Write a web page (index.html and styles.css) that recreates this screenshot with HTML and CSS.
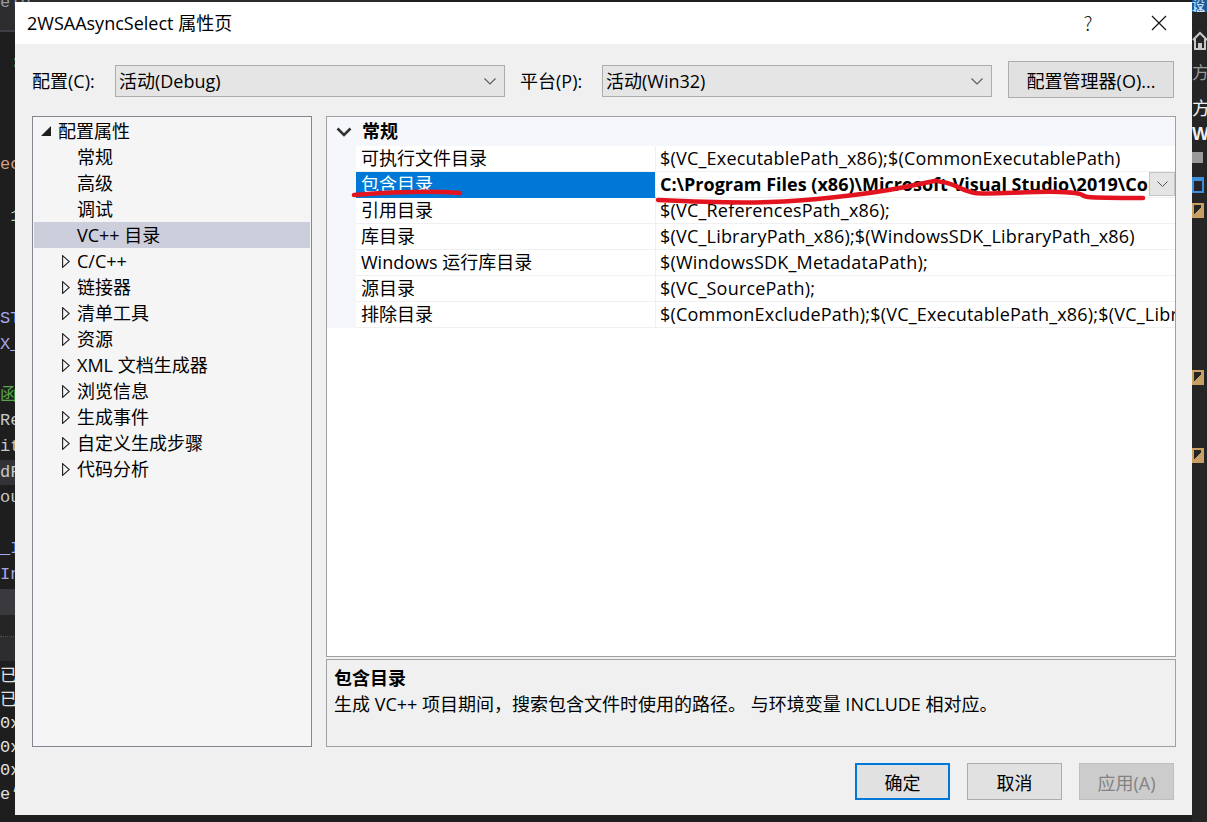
FILE: index.html
```html
<!DOCTYPE html>
<html lang="zh-CN">
<head>
<meta charset="utf-8">
<title>2WSAAsyncSelect 属性页</title>
<link rel="stylesheet" href="styles.css">
</head>
<body>
<div class="desktop">
  <div class="editor">
    <div class="ed-top">ele</div>
    <div class="ed-tabs"></div>
    <div class="code">
      <div class="ln c-green">&nbsp;:</div>
      <div class="ln"></div>
      <div class="ln"></div>
      <div class="ln"></div>
      <div class="ln c-str">ect</div>
      <div class="ln"></div>
      <div class="ln c-num">&nbsp;1</div>
      <div class="ln"></div>
      <div class="ln"></div>
      <div class="ln"></div>
      <div class="ln c-mac">ST</div>
      <div class="ln c-mac">X_</div>
      <div class="ln"></div>
      <div class="ln c-cmt">函数</div>
      <div class="ln c-gray">Re</div>
      <div class="ln c-gray">it</div>
      <div class="ln c-gray hl">dF</div>
      <div class="ln c-gray">ou</div>
      <div class="ln"></div>
      <div class="ln c-mac">_I</div>
      <div class="ln c-mac">In</div>
    </div>
    <div class="ed-scroll"></div>
    <div class="ed-gap"></div>
    <div class="out-head"></div>
    <div class="out">
      <div class="oln">已</div>
      <div class="oln">已</div>
      <div class="oln">0x</div>
      <div class="oln">0x</div>
      <div class="oln">0x</div>
      <div class="oln">e’&nbsp;&nbsp;已退出，返回值为 0 (0x0)。</div>
    </div>
  </div>

  <div class="side">
    <div class="sd-tab">设计</div>
    <svg class="sd-house" width="15" height="20" viewBox="0 0 15 20"><path d="M1 10 L8 3 L15 10 M3 9 V19 H13 V9" fill="none" stroke="#c8c8c8" stroke-width="2"/><rect x="6" y="13" width="4" height="6" fill="#c8c8c8"/></svg>
    <div class="sd-txt">方案</div>
    <div class="sd-txt2">方</div>
    <div class="sd-w">W</div>
    <div class="sd-sq"></div>
    <div class="sd-blue"></div>
    <div class="sd-gold"></div>
    <div class="sd-space"></div>
    <div class="sd-gold"></div>
    <div class="sd-space2"></div>
    <div class="sd-gold"></div>
  </div>

  <div class="dialog">
    <div class="titlebar">
      <span class="title">2WSAAsyncSelect 属性页</span>
      <span class="help">?</span>
      <span class="close">
        <svg width="16" height="16" viewBox="0 0 16 16"><path d="M1 1 L15 15 M15 1 L1 15" stroke="#1a1a1a" stroke-width="1.3"/></svg>
      </span>
    </div>

    <div class="body">
      <div class="config-row">
        <span class="lbl">配置(C):</span>
        <div class="select">
          <span>活动(Debug)</span>
          <svg class="chev" width="12" height="7" viewBox="0 0 12 7"><path d="M0.5 0.5 L6 6 L11.5 0.5" fill="none" stroke="#5a5a5a" stroke-width="1.1"/></svg>
        </div>
        <span class="lbl lbl2">平台(P):</span>
        <div class="select">
          <span>活动(Win32)</span>
          <svg class="chev" width="12" height="7" viewBox="0 0 12 7"><path d="M0.5 0.5 L6 6 L11.5 0.5" fill="none" stroke="#5a5a5a" stroke-width="1.1"/></svg>
        </div>
        <button class="btn btn-mgr">配置管理器(O)...</button>
      </div>

      <div class="main">
        <div class="tree">
          <div class="trow">
            <svg class="t-open" width="10" height="10" viewBox="0 0 10 10"><polygon points="10,0 10,10 0,10" fill="#1e1e1e"/></svg>
            <span>配置属性</span>
          </div>
          <div class="trow leaf"><span>常规</span></div>
          <div class="trow leaf"><span>高级</span></div>
          <div class="trow leaf"><span>调试</span></div>
          <div class="trow leaf sel"><span>VC++ 目录</span></div>
          <div class="trow sub"><svg class="t-closed" width="8" height="13" viewBox="0 0 8 13"><polygon points="0.6,0.6 7.3,6.5 0.6,12.4" fill="none" stroke="#1e1e1e" stroke-width="1.1"/></svg><span>C/C++</span></div>
          <div class="trow sub"><svg class="t-closed" width="8" height="13" viewBox="0 0 8 13"><polygon points="0.6,0.6 7.3,6.5 0.6,12.4" fill="none" stroke="#1e1e1e" stroke-width="1.1"/></svg><span>链接器</span></div>
          <div class="trow sub"><svg class="t-closed" width="8" height="13" viewBox="0 0 8 13"><polygon points="0.6,0.6 7.3,6.5 0.6,12.4" fill="none" stroke="#1e1e1e" stroke-width="1.1"/></svg><span>清单工具</span></div>
          <div class="trow sub"><svg class="t-closed" width="8" height="13" viewBox="0 0 8 13"><polygon points="0.6,0.6 7.3,6.5 0.6,12.4" fill="none" stroke="#1e1e1e" stroke-width="1.1"/></svg><span>资源</span></div>
          <div class="trow sub"><svg class="t-closed" width="8" height="13" viewBox="0 0 8 13"><polygon points="0.6,0.6 7.3,6.5 0.6,12.4" fill="none" stroke="#1e1e1e" stroke-width="1.1"/></svg><span>XML 文档生成器</span></div>
          <div class="trow sub"><svg class="t-closed" width="8" height="13" viewBox="0 0 8 13"><polygon points="0.6,0.6 7.3,6.5 0.6,12.4" fill="none" stroke="#1e1e1e" stroke-width="1.1"/></svg><span>浏览信息</span></div>
          <div class="trow sub"><svg class="t-closed" width="8" height="13" viewBox="0 0 8 13"><polygon points="0.6,0.6 7.3,6.5 0.6,12.4" fill="none" stroke="#1e1e1e" stroke-width="1.1"/></svg><span>生成事件</span></div>
          <div class="trow sub"><svg class="t-closed" width="8" height="13" viewBox="0 0 8 13"><polygon points="0.6,0.6 7.3,6.5 0.6,12.4" fill="none" stroke="#1e1e1e" stroke-width="1.1"/></svg><span>自定义生成步骤</span></div>
          <div class="trow sub"><svg class="t-closed" width="8" height="13" viewBox="0 0 8 13"><polygon points="0.6,0.6 7.3,6.5 0.6,12.4" fill="none" stroke="#1e1e1e" stroke-width="1.1"/></svg><span>代码分析</span></div>
        </div>

        <div class="right">
          <div class="grid">
            <div class="cat">
              <svg class="cat-chev" width="16" height="10" viewBox="0 0 16 10"><path d="M1.5 1.5 L8 8 L14.5 1.5" fill="none" stroke="#333" stroke-width="2.6"/></svg>
              <span class="cat-name">常规</span>
            </div>
            <div class="prow">
              <div class="pm"></div>
              <div class="pn">可执行文件目录</div>
              <div class="pv">$(VC_ExecutablePath_x86);$(CommonExecutablePath)</div>
            </div>
            <div class="prow psel">
              <div class="pm"></div>
              <div class="pn">包含目录</div>
              <div class="pv">
                <span class="pv-text">C:\Program Files (x86)\Microsoft Visual Studio\2019\Community\VC\Tools\MSVC\include</span>
                <span class="pv-drop"><svg width="11" height="6" viewBox="0 0 11 6"><path d="M0.5 0.5 L5.5 5.5 L10.5 0.5" fill="none" stroke="#555" stroke-width="1"/></svg></span>
              </div>
            </div>
            <div class="prow">
              <div class="pm"></div>
              <div class="pn">引用目录</div>
              <div class="pv">$(VC_ReferencesPath_x86);</div>
            </div>
            <div class="prow">
              <div class="pm"></div>
              <div class="pn">库目录</div>
              <div class="pv">$(VC_LibraryPath_x86);$(WindowsSDK_LibraryPath_x86)</div>
            </div>
            <div class="prow">
              <div class="pm"></div>
              <div class="pn">Windows 运行库目录</div>
              <div class="pv">$(WindowsSDK_MetadataPath);</div>
            </div>
            <div class="prow">
              <div class="pm"></div>
              <div class="pn">源目录</div>
              <div class="pv">$(VC_SourcePath);</div>
            </div>
            <div class="prow">
              <div class="pm"></div>
              <div class="pn">排除目录</div>
              <div class="pv">$(CommonExcludePath);$(VC_ExecutablePath_x86);$(VC_LibraryPath_x86)</div>
            </div>
          </div>
          <div class="desc">
            <div class="desc-title">包含目录</div>
            <div class="desc-text">生成 VC++ 项目期间，搜索包含文件时使用的路径。 与环境变量 INCLUDE 相对应。</div>
          </div>
        </div>
      </div>

      <div class="buttons">
        <button class="btn btn-ok">确定</button>
        <button class="btn">取消</button>
        <button class="btn btn-dis">应用(A)</button>
      </div>
    </div>
  </div>

  <svg class="marks" width="1207" height="822" viewBox="0 0 1207 822">
    <path d="M354 195 C 380 193, 420 190, 460 193" fill="none" stroke="#e3141f" stroke-width="4.5" stroke-linecap="round"/>
    <path d="M658 200 C 700 202, 740 203, 770 202 S 860 196, 905 187 S 930 181, 942 182 S 962 191, 975 193 S 1030 191, 1060 192 S 1078 196, 1088 197 S 1130 198, 1143 198" fill="none" stroke="#e3141f" stroke-width="4.5" stroke-linecap="round"/>
  </svg>
</div>
</body>
</html>
```
FILE: styles.css
```css
* { box-sizing: border-box; }

html, body {
  margin: 0;
  padding: 0;
}

body {
  width: 1207px;
  height: 822px;
  overflow: hidden;
  background: #1e1e1e;
}

.desktop {
  position: relative;
  width: 1207px;
  height: 822px;
  overflow: hidden;
  background: #1e1e1e;
}

/* ---------- background editor (left) ---------- */
.editor {
  position: absolute;
  left: 0;
  top: 0;
  width: 400px;
  height: 822px;
  background: #1e1e1e;
  font-family: "Liberation Mono", "Noto Sans CJK SC", monospace;
  font-size: 17px;
  color: #dcdcdc;
}
.ed-top {
  height: 10px;
  line-height: 6px;
  color: #9a9a9a;
  overflow: hidden;
  background: #2d2d30;
}
.ed-tabs {
  height: 22px;
  background: #2d2d30;
  border-bottom: 2px solid #3f3f46;
}
.code {
  padding-top: 18px;
}
.ln {
  height: 25.6px;
  line-height: 25.6px;
  white-space: pre;
}
.c-green { color: #57a64a; }
.c-str { color: #d69d85; }
.c-num { color: #b5cea8; }
.c-mac { color: #a6a6e8; }
.c-cmt { color: #57a64a; }
.c-gray { color: #c8c8c8; }
.hl { background: #333337; }
.ed-scroll {
  height: 26px;
  margin-top: 2px;
  background: #3a3a3e;
}
.ed-gap {
  height: 22px;
  background: #252526;
  border-bottom: 1px dotted #555;
}
.out-head {
  height: 24px;
  background: #2d2d30;
}
.out {
  padding-top: 4px;
}
.oln {
  height: 23.5px;
  line-height: 23.5px;
  white-space: pre;
  color: #e0e0e0;
}

/* ---------- right side strip ---------- */
.side {
  position: absolute;
  left: 1192px;
  top: 0;
  width: 15px;
  height: 822px;
  background: #252526;
  display: flex;
  flex-direction: column;
  align-items: flex-start;
  overflow: hidden;
  font-family: "Noto Sans CJK SC", sans-serif;
}
.sd-tab {
  width: 15px;
  height: 12px;
  background: #1c5a99;
  color: #d0e4ff;
  font-size: 13px;
  line-height: 8px;
  overflow: hidden;
}
.sd-house {
  margin-top: 18px;
  margin-left: 0;
}
.sd-txt {
  margin-top: 10px;
  height: 24px;
  font-size: 17px;
  line-height: 24px;
  color: #9a9a9a;
  white-space: nowrap;
}
.sd-txt2 {
  margin-top: 12px;
  height: 22px;
  font-size: 18px;
  line-height: 22px;
  color: #f0f0f0;
  white-space: nowrap;
}
.sd-w {
  margin-top: 6px;
  font-family: "Liberation Sans", sans-serif;
  font-weight: bold;
  font-size: 18px;
  line-height: 20px;
  color: #f0f0f0;
}
.sd-sq {
  margin-top: 8px;
  width: 11px;
  height: 11px;
  background: #9a9a9a;
}
.sd-blue {
  margin-top: 14px;
  width: 12px;
  height: 16px;
  border: 2px solid #3c8fd8;
  border-top-width: 4px;
}
.sd-gold {
  margin-top: 10px;
  width: 12px;
  height: 15px;
  border: 2px solid #c8a064;
  border-right-width: 3px;
  background: linear-gradient(135deg, transparent 55%, #c8a064 55%);
}
.sd-space { height: 142px; }
.sd-space2 { height: 53px; }

/* ---------- dialog ---------- */
.dialog {
  position: absolute;
  left: 15px;
  top: 2px;
  width: 1177px;
  height: 813px;
  background: #f0f0f0;
  font-family: "Open Sans", "Noto Sans CJK SC", sans-serif;
  font-size: 18px;
  color: #000;
  display: flex;
  flex-direction: column;
}

.titlebar {
  height: 42px;
  background: #ffffff;
  display: flex;
  align-items: center;
  flex: none;
}
.title {
  flex: 1;
  padding-left: 12px;
  line-height: 42px;
  color: #000;
  white-space: nowrap;
}
.help {
  width: 76px;
  text-align: center;
  font-family: "Noto Sans CJK SC", sans-serif;
  font-size: 20px;
  font-weight: 300;
  color: #1a1a1a;
  line-height: 42px;
}
.close {
  width: 66px;
  height: 42px;
  display: flex;
  align-items: center;
  justify-content: center;
}

.body {
  flex: 1;
  padding: 17px 17px 0 17px;
  display: flex;
  flex-direction: column;
}

.config-row {
  height: 37px;
  display: flex;
  align-items: flex-start;
  flex: none;
}
.lbl {
  width: 83px;
  line-height: 40px;
  white-space: nowrap;
}
.lbl2 {
  margin-left: 15px;
  width: 82px;
}
.select {
  width: 390px;
  height: 32px;
  margin-top: 4px;
  background: #e5e5e5;
  border: 1px solid #adadad;
  display: flex;
  align-items: center;
  padding-left: 3px;
  padding-right: 8px;
  line-height: 30px;
}
.select span { flex: 1; white-space: nowrap; }
.chev { flex: none; }

.btn {
  font-family: "Open Sans", "Noto Sans CJK SC", sans-serif;
  font-size: 18px;
  color: #000;
  background: #e1e1e1;
  border: 1px solid #adadad;
  height: 37px;
  padding: 0;
  margin: 0;
  white-space: nowrap;
}
.btn-mgr {
  margin-left: 16px;
  width: 166px;
}

.main {
  margin-top: 18px;
  height: 631px;
  display: flex;
  flex: none;
}

/* tree */
.tree {
  width: 280px;
  height: 631px;
  background: #f5f5f5;
  border: 1px solid #828790;
  padding: 1px;
  flex: none;
}
.trow {
  height: 26px;
  display: flex;
  align-items: center;
  white-space: nowrap;
  line-height: 26px;
}
.t-open {
  margin-left: 7px;
  margin-right: 7px;
  flex: none;
}
.trow.leaf { padding-left: 43px; }
.trow.sub { padding-left: 28px; }
.t-closed {
  margin-right: 7px;
  flex: none;
}
.trow.sel { background: #cccedb; }

/* right column */
.right {
  margin-left: 14px;
  width: 850px;
  min-width: 0;
  flex: none;
  display: flex;
  flex-direction: column;
}
.grid {
  width: 850px;
  height: 541px;
  background: #ffffff;
  border: 1px solid #a0a0a0;
  overflow: hidden;
  flex: none;
}
.cat {
  height: 29px;
  background: #f5f7fa;
  display: flex;
  align-items: center;
}
.cat-chev {
  margin-left: 9px;
  margin-top: 1px;
  flex: none;
}
.cat-name {
  margin-left: 10px;
  font-weight: bold;
  line-height: 29px;
}
.prow {
  height: 26px;
  display: flex;
  white-space: nowrap;
}
.pm {
  width: 29px;
  flex: none;
  background: #f5f7fa;
}
.pn {
  width: 300px;
  flex: none;
  padding-left: 5px;
  line-height: 25px;
  border-right: 1px solid #f0f0f0;
  border-bottom: 1px solid #f0f0f0;
  overflow: hidden;
}
.pv {
  flex: 1;
  min-width: 0;
  padding-left: 4px;
  line-height: 25px;
  letter-spacing: 0.2px;
  border-bottom: 1px solid #f0f0f0;
  overflow: hidden;
  display: flex;
}
.psel .pn {
  background: #0078d7;
  color: #fff;
  border-bottom-color: #0078d7;
}
.psel .pv { font-weight: bold; letter-spacing: 0; }
.pv-text {
  flex: 1;
  min-width: 0;
  overflow: hidden;
  white-space: nowrap;
}
.pv-drop {
  width: 26px;
  height: 24px;
  flex: none;
  background: #e5e5e5;
  border: 1px solid #c4c4c4;
  display: flex;
  align-items: center;
  justify-content: center;
}

.desc {
  margin-top: 2px;
  width: 850px;
  height: 88px;
  background: #f0f0f0;
  border: 1px solid #a0a0a0;
  padding: 5px 7px 0 7px;
  flex: none;
}
.desc-title {
  font-weight: bold;
  line-height: 26px;
}
.desc-text {
  line-height: 26px;
  white-space: nowrap;
}

/* buttons */
.buttons {
  margin-top: 16px;
  display: flex;
  justify-content: flex-end;
  gap: 17px;
  padding-right: 1px;
}
.buttons .btn { width: 95px; }
.btn-ok { border: 2px solid #0078d7; }
.btn-dis {
  background: #cccccc;
  border-color: #bfbfbf;
  color: #838383;
}

/* annotation marks */
.marks {
  position: absolute;
  left: 0;
  top: 0;
  pointer-events: none;
}
```
